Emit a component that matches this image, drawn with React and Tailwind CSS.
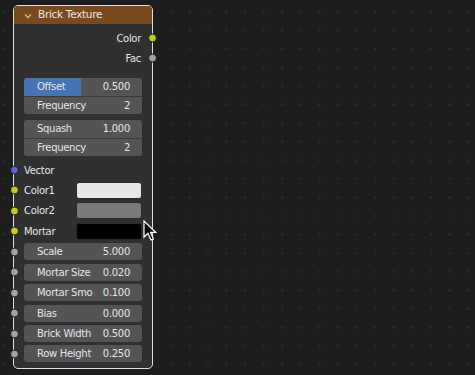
import React from "react";

const font = "font-['DejaVu_Sans','Liberation_Sans',sans-serif] text-[10px] tracking-[-0.3px]";

// node socket, sits on the node border
function Socket({ side = "left", color = "bg-[#a1a1a1]" }) {
  const pos = side === "left" ? "left-[-4.5px]" : "right-[-4.5px]";
  return (
    <span
      className={`absolute ${pos} top-1/2 -translate-y-1/2 w-[9px] h-[9px] rounded-full border border-[#1a1a1a] ${color}`}
    />
  );
}

function OutputRow({ label, color }) {
  return (
    <div className="relative h-[20px] flex items-center justify-end pr-[11px] text-[#e6e6e6]">
      {label}
      <Socket side="right" color={color} />
    </div>
  );
}

function Field({ label, value, fill = false }) {
  return (
    <div
      className={`h-[17.5px] flex items-center justify-between pl-[13px] pr-[12px] text-[#e6e6e6] ${
        fill
          ? "bg-[linear-gradient(to_right,#4772b3_57px,#545454_57px)]"
          : "bg-[#545454]"
      }`}
    >
      <span>{label}</span>
      <span>{value}</span>
    </div>
  );
}

function ColorRow({ label, swatch, socket = "bg-[#c7c729]" }) {
  return (
    <div className="relative h-[20.3px] flex items-center px-[10px] text-[#e6e6e6]">
      <Socket color={socket} />
      <span className="flex-1">{label}</span>
      {swatch && (
        <span
          className={`w-[66px] h-[17px] rounded-[3px] border border-[#2a2a2a] ${swatch}`}
        />
      )}
    </div>
  );
}

function InputField({ label, value }) {
  return (
    <div className="relative h-[17px] px-[10px]">
      <Socket />
      <div className="h-full rounded-[3px] bg-[#545454] flex items-center justify-between pl-[13px] pr-[12px] text-[#e6e6e6]">
        <span>{label}</span>
        <span>{value}</span>
      </div>
    </div>
  );
}

export default function App() {
  const inputs = [
    ["Scale", "5.000"],
    ["Mortar Size", "0.020"],
    ["Mortar Smo", "0.100"],
    ["Bias", "0.000"],
    ["Brick Width", "0.500"],
    ["Row Height", "0.250"],
  ];

  return (
    <div
      className={`relative w-[475px] h-[375px] overflow-hidden bg-[#1d1d1d] bg-[radial-gradient(circle,#2c2c2c_1px,transparent_1.4px)] bg-[length:18.6px_18.6px] bg-[position:-5.8px_2.2px] ${font}`}
    >
      {/* NODE */}
      <div className="absolute left-[13px] top-[5px] w-[140px] h-[364px] rounded-[5px] border border-[#dedede] bg-[#303030] flex flex-col">
        {/* HEADER */}
        <div className="h-[18px] rounded-t-[4px] bg-[#7a4a1f] flex items-center pl-[10px] gap-[6px] text-[#e8e8e8] text-[10.5px]">
          <svg width="8" height="6" viewBox="0 0 8 6" className="mt-[1px]">
            <polyline
              points="1,1.5 4,4.5 7,1.5"
              fill="none"
              stroke="#cdb9a6"
              strokeWidth="1.3"
            />
          </svg>
          <span>Brick Texture</span>
        </div>

        {/* OUTPUTS */}
        <div className="pt-[4px]">
          <OutputRow label="Color" color="bg-[#c7c729]" />
          <OutputRow label="Fac" />
        </div>

        {/* GROUP 1 */}
        <div className="mt-[10px] mx-[10px] rounded-[3px] overflow-hidden flex flex-col gap-[1px] bg-[#3a3a3a]">
          <Field label="Offset" value="0.500" fill />
          <Field label="Frequency" value="2" />
        </div>

        {/* GROUP 2 */}
        <div className="mt-[6px] mx-[10px] rounded-[3px] overflow-hidden flex flex-col gap-[1px] bg-[#3a3a3a]">
          <Field label="Squash" value="1.000" />
          <Field label="Frequency" value="2" />
        </div>

        {/* VECTOR + COLORS */}
        <div className="mt-[4px]">
          <ColorRow label="Vector" socket="bg-[#6363c7]" />
          <ColorRow label="Color1" swatch="bg-[#e7e7e7]" />
          <ColorRow label="Color2" swatch="bg-[#7a7a7a]" />
          <ColorRow label="Mortar" swatch="bg-[#000000]" />
        </div>

        {/* NUMERIC INPUTS */}
        <div className="mt-[2.3px] flex flex-col gap-[3.4px]">
          {inputs.map(([l, v]) => (
            <InputField key={l} label={l} value={v} />
          ))}
        </div>
      </div>

      {/* MOUSE CURSOR */}
      <svg
        className="absolute left-[143px] top-[220px]"
        width="14"
        height="22"
        viewBox="0 0 14 22"
      >
        <path
          d="M1 1 L1 17 L5 13.2 L8 20 L10.4 19 L7.5 12.3 L12.6 12.3 Z"
          fill="#000"
          stroke="#fff"
          strokeWidth="1.2"
          strokeLinejoin="miter"
        />
      </svg>
    </div>
  );
}
